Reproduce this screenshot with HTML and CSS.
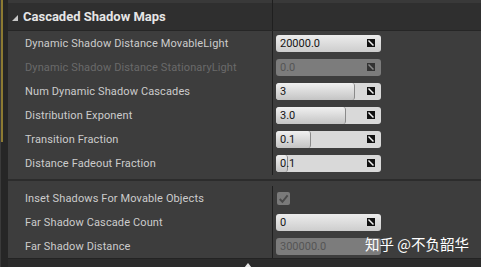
FILE: index.html
```html
<!DOCTYPE html>
<html lang="en">
<head>
<meta charset="UTF-8" />
<title>Cascaded Shadow Maps</title>
<link rel="stylesheet" href="styles.css">
</head>
<body>

<div class="editor">
  <div class="gutter"><div class="focus"></div></div>

  <div class="panel">
    <div class="topstrip"><div class="name"></div><div class="value"></div></div>

    <div class="category">
      <div class="name"><span class="arrow"></span>Cascaded Shadow Maps</div>
      <div class="value"></div>
    </div>

    <div class="group">
      <div class="row">
        <div class="name">Dynamic Shadow Distance MovableLight</div>
        <div class="value"><div class="num"><span class="txt">20000.0</span><svg class="drag" viewBox="0 0 8 8"><path d="M0 0H8V8H0Z" fill="#111"/><path d="M1.5 1.5L6.5 6.5" stroke="#f0f0f0" stroke-width="1.5"/></svg></div></div>
      </div>
      <div class="row off">
        <div class="name">Dynamic Shadow Distance StationaryLight</div>
        <div class="value"><div class="num"><span class="txt">0.0</span><svg class="drag" viewBox="0 0 8 8"><path d="M0 0H8V8H0Z" fill="#333"/><path d="M1.5 1.5L6.5 6.5" stroke="#888" stroke-width="1.5"/></svg></div></div>
      </div>
      <div class="row">
        <div class="name">Num Dynamic Shadow Cascades</div>
        <div class="value"><div class="num slider"><div class="fill" style="width:75%"></div><span class="txt">3</span><svg class="drag" viewBox="0 0 8 8"><path d="M0 0H8V8H0Z" fill="#111"/><path d="M1.5 1.5L6.5 6.5" stroke="#f0f0f0" stroke-width="1.5"/></svg></div></div>
      </div>
      <div class="row">
        <div class="name">Distribution Exponent</div>
        <div class="value"><div class="num slider"><div class="fill" style="width:67%"></div><span class="txt">3.0</span><svg class="drag" viewBox="0 0 8 8"><path d="M0 0H8V8H0Z" fill="#111"/><path d="M1.5 1.5L6.5 6.5" stroke="#f0f0f0" stroke-width="1.5"/></svg></div></div>
      </div>
      <div class="row">
        <div class="name">Transition Fraction</div>
        <div class="value"><div class="num slider"><div class="fill" style="width:33%"></div><span class="txt">0.1</span><svg class="drag" viewBox="0 0 8 8"><path d="M0 0H8V8H0Z" fill="#111"/><path d="M1.5 1.5L6.5 6.5" stroke="#f0f0f0" stroke-width="1.5"/></svg></div></div>
      </div>
      <div class="row">
        <div class="name">Distance Fadeout Fraction</div>
        <div class="value"><div class="num slider"><div class="fill" style="width:11%"></div><span class="txt">0.1</span><svg class="drag" viewBox="0 0 8 8"><path d="M0 0H8V8H0Z" fill="#111"/><path d="M1.5 1.5L6.5 6.5" stroke="#f0f0f0" stroke-width="1.5"/></svg></div></div>
      </div>
    </div>

    <div class="gap"><div class="line"></div></div>

    <div class="group second">
      <div class="row">
        <div class="name">Inset Shadows For Movable Objects</div>
        <div class="value"><div class="check"><svg viewBox="0 0 12 12"><path d="M2.5 6.5L5 9L9.8 3.2" fill="none" stroke="#4a4a4a" stroke-width="1.8"/></svg></div></div>
      </div>
      <div class="row">
        <div class="name">Far Shadow Cascade Count</div>
        <div class="value"><div class="num"><span class="txt">0</span><svg class="drag" viewBox="0 0 8 8"><path d="M0 0H8V8H0Z" fill="#111"/><path d="M1.5 1.5L6.5 6.5" stroke="#f0f0f0" stroke-width="1.5"/></svg></div></div>
      </div>
      <div class="row">
        <div class="name">Far Shadow Distance</div>
        <div class="value"><div class="num locked"><span class="txt">300000.0</span></div></div>
      </div>
    </div>

    <div class="bottom"><span class="grip"></span></div>
  </div>

  <div class="watermark">知乎 @不负韶华</div>
</div>

</body>
</html>
```

FILE: styles.css
```css
body { margin: 0; background: #2a2a2a; font-family: Roboto, "Liberation Sans", sans-serif; font-size: 11px; color: #cccccc; }
.editor { position: relative; display: flex; width: 481px; height: 267px; overflow: hidden; }
.gutter { width: 8px; flex: none; background: #262626; border-left: 1px solid #3a3a3a; box-sizing: border-box; }
.focus { width: 2px; height: 142px; background: #8c7a32; }
.panel { flex: 1; display: flex; flex-direction: column; background: #3d3d3d; }

.topstrip { height: 3px; display: flex; background: #393939; }
.name { width: 265px; flex: none; box-sizing: border-box; border-right: 1px solid #1f1f1f; }
.value { flex: 1; }

.category { height: 27px; display: flex; background: #2f2f2f; border-bottom: 1px solid #262626; }
.category .name { display: flex; align-items: center; padding-left: 4px; font-size: 13px; font-weight: bold; color: #e6e6e6; }
.arrow { width: 0; height: 0; border-left: 6px solid transparent; border-bottom: 6px solid #c8c8c8; margin: 3px 5px 0 0; }

.row { height: 24px; display: flex; }
.row .name { display: flex; align-items: center; padding-left: 17px; letter-spacing: 0.12px; }
.row .value { display: flex; align-items: center; padding-left: 3px; }
.row.off .name { color: #6a6a6a; }

.num { position: relative; width: 105px; height: 17px; box-sizing: border-box; border-radius: 3px; background: linear-gradient(#ececec, #cdcdcd); display: flex; align-items: center; color: #141414; overflow: hidden; }
.txt { position: relative; padding-left: 4px; flex: 1; }
.drag { position: relative; width: 8px; height: 8px; margin-right: 6px; }
.row.off .num, .num.locked { background: #7c7c7c; color: #555; }

.slider { background: #d9d9d9; }
.fill { position: absolute; left: 0; top: 0; bottom: 0; background: linear-gradient(#f0f0f0, #c4c4c4); border-right: 1px solid #8a8a8a; border-radius: 3px; box-sizing: border-box; }

.check { width: 13px; height: 13px; margin-left: 1px; border-radius: 2px; background: #7a7a7a; display: flex; }
.check svg { width: 13px; height: 13px; }

.gap { height: 11px; display: flex; align-items: center; }
.gap .line { flex: 1; height: 2px; background: #2c2c2c; margin-top: -2px; }

.bottom { flex: 1; background: #2b2b2b; border-top: 1px solid #232323; position: relative; }
.grip { position: absolute; left: 236px; top: 4px; width: 0; height: 0; border-left: 4px solid transparent; border-right: 4px solid transparent; border-bottom: 5px solid #e8e8e8; }

.watermark { position: absolute; left: 365px; top: 234px; font-family: "Noto Sans CJK SC", sans-serif; font-size: 14.5px; line-height: 20px; color: #fff; white-space: nowrap; }
```
